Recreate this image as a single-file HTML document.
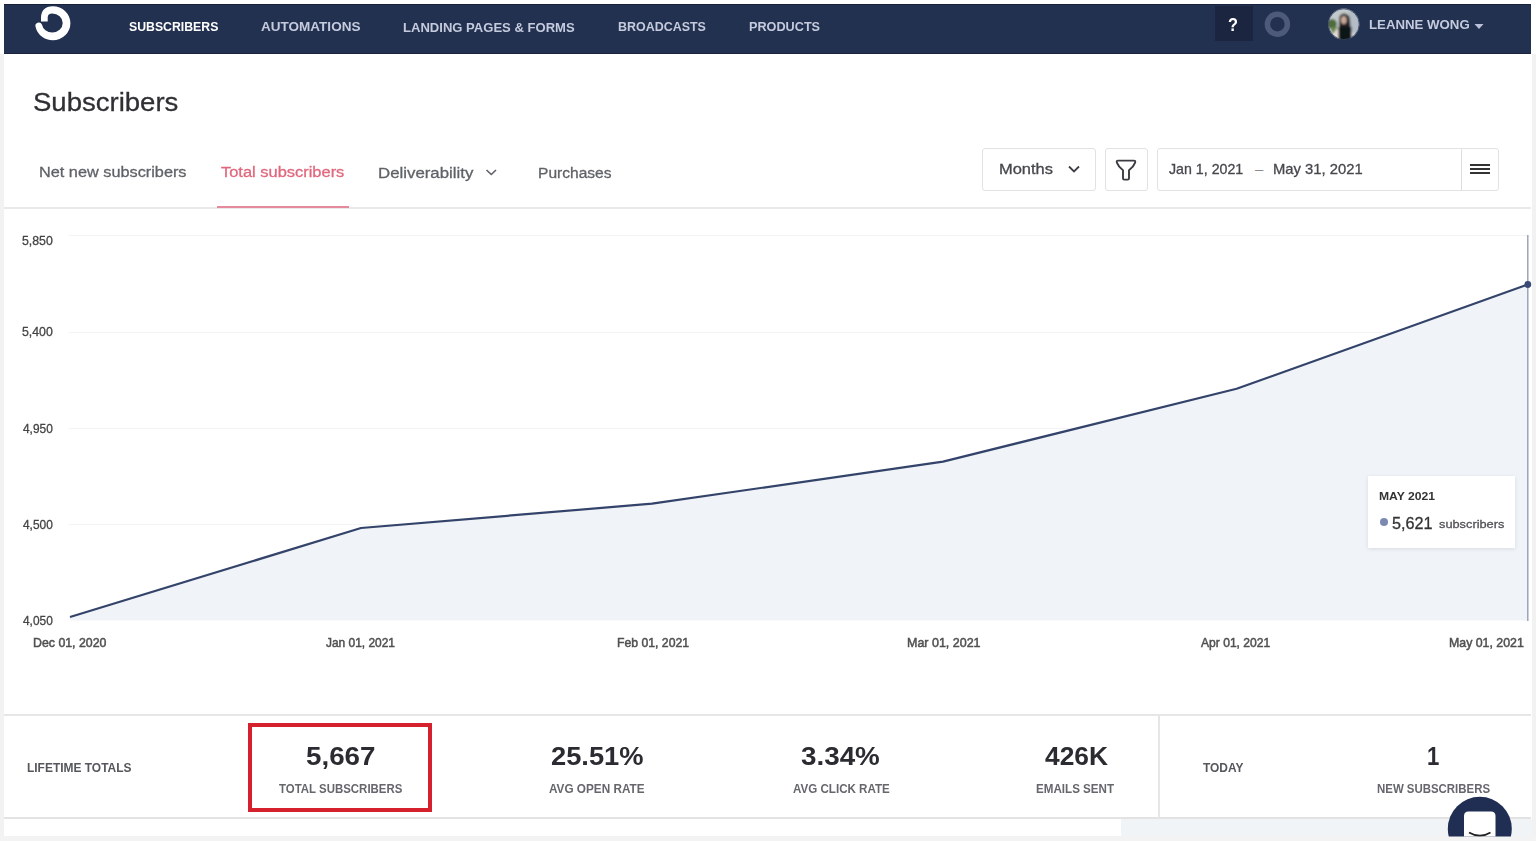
<!DOCTYPE html>
<html><head><meta charset="utf-8">
<style>
html,body{margin:0;padding:0;}
body{width:1536px;height:841px;overflow:hidden;position:relative;background:#fff;font-family:"Liberation Sans",sans-serif;}
.a{position:absolute;white-space:pre;line-height:1;}
.t{position:absolute;white-space:pre;line-height:1;transform-origin:0 0;}
.r{-webkit-text-stroke:0.3px currentColor;}
.sb{-webkit-text-stroke:0.5px currentColor;}
#lstrip{position:absolute;left:0;top:54px;width:4px;height:787px;background:#f2f2f2;}
#rstrip{position:absolute;left:1532px;top:54px;width:4px;height:787px;background:#f2f2f2;}
#nav{position:absolute;left:4px;top:4px;width:1527px;height:50px;background:#233150;}
.nv{color:#c9cfe2;font-weight:700;font-size:13px;}
.tab{color:#5d6066;font-size:16px;}
.lbl{color:#555;font-size:12px;}
.xl{color:#595959;font-size:12px;font-weight:700;}
.box{position:absolute;border:1px solid #e2e2e2;border-radius:3px;background:#fff;box-sizing:border-box;}
.big{color:#2b2d33;font-size:26px;font-weight:700;}
.cap{color:#686a6f;font-size:12px;font-weight:700;letter-spacing:0.3px;}
</style></head><body>
<div id="lstrip"></div><div id="rstrip"></div>
<div id="nav"></div>
<div class="a" style="left:4px;top:4px;width:1527px;height:1px;background:#18213b"></div>
<div class="a" style="left:4px;top:52.5px;width:1527px;height:1.3px;background:#1a2340"></div>
<!-- logo -->
<svg class="a" style="left:0;top:0" width="90" height="54" viewBox="0 0 90 54">
  <path d="M41 21.6 L41 17.5 Q41.3 6.5 52.8 6.3 A17.6 17 0 0 1 70.4 23.3 A17.6 17 0 0 1 52.8 40.3 A17.6 17 0 0 1 35.6 27 A3.4 3.4 0 0 1 41.9 24.5 A10.45 9.45 0 0 0 52.25 32.4 A10.45 9.45 0 0 0 62.7 22.95 A10.45 9.45 0 0 0 52.25 13.5 Q47.7 13.6 47.7 17.5 L47.7 21.6 Z" fill="#fff"/>
</svg>
<div class="a" style="left:1215px;top:6px;width:38px;height:35px;background:#1b253f"></div>
<svg class="a" style="left:1262px;top:9px" width="30" height="30"><circle cx="15.4" cy="15.2" r="10" fill="none" stroke="#4d5a7a" stroke-width="5.5"/></svg>
<svg class="a" style="left:1327px;top:8px" width="34" height="34" viewBox="0 0 34 34">
  <defs><clipPath id="av"><circle cx="16.8" cy="16.2" r="15.6"/></clipPath><filter id="bl"><feGaussianBlur stdDeviation="0.8"/></filter></defs>
  <g clip-path="url(#av)"><g filter="url(#bl)">
   <rect x="-2" y="-2" width="38" height="38" fill="#c3cacc"/>
   <rect x="22" y="0" width="14" height="34" fill="#b4bcc6"/>
   <ellipse cx="5" cy="16" rx="5" ry="5" fill="#4f6b3a"/>
   <ellipse cx="8" cy="22" rx="4" ry="3" fill="#6d8850"/>
   <path d="M6 34 Q6 22 11 20 L13 28 L13 34Z" fill="#e6ddd6"/>
   <path d="M23 34 L23 26 Q26 22 28 26 L28 34Z" fill="#dcd8dc"/>
   <path d="M12 34 L12 12 Q12 5.5 17 5.5 Q22.5 5.5 23 12 L24.5 34Z" fill="#221c20"/>
   <ellipse cx="16.8" cy="12" rx="2.9" ry="4" fill="#c9a99a"/>
   <rect x="11.5" y="19" width="13" height="16" fill="#111318"/>
  </g></g>
  <circle cx="16.8" cy="16.2" r="15.4" fill="none" stroke="#3b4766" stroke-width="0.8"/>
</svg>
<svg class="a" style="left:1474px;top:23px" width="11" height="7"><path d="M0.5 1 L9.5 1 L5 6Z" fill="#b9c1d8"/></svg>

<!-- title -->

<!-- tabs -->
<svg class="a" style="left:485px;top:168px" width="13" height="9"><path d="M1.5 2 L6.3 6.5 L11 2" fill="none" stroke="#5d6066" stroke-width="1.6"/></svg>
<div class="a" style="left:4px;top:207px;width:1527px;height:2px;background:#e9e9ea"></div>
<div class="a" style="left:217px;top:205.5px;width:132px;height:2.5px;background:#e58a9c"></div>

<!-- controls -->
<div class="box" style="left:982px;top:148px;width:114px;height:43px"></div>
<svg class="a" style="left:1067px;top:164px" width="14" height="10"><path d="M2 2.5 L7 7.5 L12 2.5" fill="none" stroke="#3d3f44" stroke-width="1.8"/></svg>
<div class="box" style="left:1105px;top:148px;width:43px;height:43px"></div>
<svg class="a" style="left:1114px;top:158px" width="24" height="24" viewBox="0 0 24 24"><path d="M4.2 2.6 H19.8 Q21.8 2.6 21.1 4.6 Q19.5 9 15 12.2 V20.3 Q15 21.6 13.8 21.6 H10.2 Q9 21.6 9 20.3 V12.2 Q4.5 9 2.9 4.6 Q2.2 2.6 4.2 2.6Z" fill="none" stroke="#3a3c41" stroke-width="1.9" stroke-linejoin="round"/></svg>
<div class="box" style="left:1157px;top:148px;width:342px;height:43px"></div>
<div class="a" style="left:1461px;top:149px;width:1px;height:41px;background:#dedede"></div>
<div class="a" style="left:1255px;top:161px;font-size:15px;color:#8a8c90">–</div>
<div class="a" style="left:1470px;top:164px;width:20px;height:2px;background:#333;box-shadow:0 4px 0 #333,0 8px 0 #333"></div>

<!-- chart -->
<svg class="a" style="left:0;top:0" width="1536" height="700" viewBox="0 0 1536 700">
  <g stroke="#f3f4f5" stroke-width="1">
    <line x1="68" y1="235.5" x2="1527" y2="235.5"/>
    <line x1="68" y1="332.5" x2="1527" y2="332.5"/>
    <line x1="68" y1="428.5" x2="1527" y2="428.5"/>
    <line x1="68" y1="524.5" x2="1527" y2="524.5"/>
  </g>
  <path d="M70 617 L361 528 L652 503.7 L943 461.6 L1236.6 388.8 L1527.8 284.5 L1527.8 620.5 L70 620.5Z" fill="#f0f3f7"/>
  <line x1="1527.8" y1="235" x2="1527.8" y2="621" stroke="#959db6" stroke-width="1.4"/>
  <path d="M70 617 L361 528 L652 503.7 L943 461.6 L1236.6 388.8 L1527.8 284.5" fill="none" stroke="#33436a" stroke-width="2.2" stroke-linejoin="round"/>
  <circle cx="1527.8" cy="284.5" r="3.4" fill="#3a4a75"/>
</svg>

<!-- tooltip -->
<div class="a" style="left:1368px;top:476px;width:147px;height:72px;background:#fff;box-shadow:0 1px 4px rgba(0,0,0,0.10)"></div>
<div class="a" style="left:1379.5px;top:518px;width:8px;height:8px;border-radius:50%;background:#7d8ab0"></div>

<!-- stats -->
<div class="a" style="left:4px;top:714px;width:1527px;height:2px;background:#e6e6e7"></div>
<div class="a" style="left:4px;top:817px;width:1527px;height:2px;background:#e3e3e4"></div>
<div class="a" style="left:1158px;top:715px;width:2px;height:103px;background:#e6e6e7"></div>
<div class="a" style="left:1121px;top:819px;width:411px;height:18px;background:#f1f4f7"></div>
<div class="a" style="left:0;top:836px;width:1536px;height:5px;background:#f3f3f3"></div>
<div class="a" style="left:248px;top:723px;width:184px;height:89px;box-sizing:border-box;border:4px solid #d5202e"></div>

<!-- chat bubble -->
<svg class="a" style="left:1440px;top:790px" width="80" height="51" viewBox="0 0 80 51">
  <defs><clipPath id="cb"><rect x="0" y="0" width="80" height="46.5"/></clipPath></defs>
  <g clip-path="url(#cb)">
    <circle cx="39.8" cy="38.8" r="32" fill="#1f2e52"/>
    <path d="M24 51 V26 Q24 21.5 28.5 21.5 H51 Q55.5 21.5 55.5 26 V51Z" fill="#fff"/>
    <path d="M29 42.5 Q40 49 50.5 42.5" fill="none" stroke="#222" stroke-width="1.8"/>
  </g>
</svg>
<div class="t" style="left:129.2px;top:20.2px;font-size:13.50px;font-weight:700;color:#ffffff;transform:scaleX(0.909)">SUBSCRIBERS</div>
<div class="t" style="left:261.3px;top:20.4px;font-size:13.50px;font-weight:700;color:#c5cbdd;transform:scaleX(1.002)">AUTOMATIONS</div>
<div class="t" style="left:403.3px;top:20.5px;font-size:13.50px;font-weight:700;color:#c5cbdd;transform:scaleX(0.967)">LANDING PAGES &amp; FORMS</div>
<div class="t" style="left:617.7px;top:20.4px;font-size:13.50px;font-weight:700;color:#c5cbdd;transform:scaleX(0.923)">BROADCASTS</div>
<div class="t" style="left:748.7px;top:20.4px;font-size:13.50px;font-weight:700;color:#c5cbdd;transform:scaleX(0.938)">PRODUCTS</div>
<div class="t" style="left:1369.4px;top:17.8px;font-size:13.50px;font-weight:700;color:#c5cbdd;transform:scaleX(0.980)">LEANNE WONG</div>
<div class="t" style="left:1228.0px;top:16.6px;font-size:17.50px;font-weight:700;color:#ffffff;transform:scaleX(0.934)">?</div>
<div class="t r" style="left:33.3px;top:88.8px;font-size:26.50px;font-weight:400;color:#2e3034;transform:scaleX(1.039)">Subscribers</div>
<div class="t r" style="left:38.7px;top:164.4px;font-size:15.40px;font-weight:400;color:#5f6267;transform:scaleX(1.058)">Net new subscribers</div>
<div class="t r" style="left:221.2px;top:164.4px;font-size:15.40px;font-weight:400;color:#e0677d;transform:scaleX(1.068)">Total subscribers</div>
<div class="t r" style="left:378.4px;top:164.5px;font-size:15.40px;font-weight:400;color:#5f6267;transform:scaleX(1.093)">Deliverability</div>
<div class="t r" style="left:538.3px;top:164.5px;font-size:15.40px;font-weight:400;color:#5f6267;transform:scaleX(1.011)">Purchases</div>
<div class="t r" style="left:998.7px;top:161.8px;font-size:14.40px;font-weight:400;color:#46484d;transform:scaleX(1.144)">Months</div>
<div class="t r" style="left:1168.5px;top:161.9px;font-size:14.40px;font-weight:400;color:#46484d;transform:scaleX(0.987)">Jan 1, 2021</div>
<div class="t r" style="left:1273.2px;top:161.9px;font-size:14.40px;font-weight:400;color:#46484d;transform:scaleX(1.028)">May 31, 2021</div>
<div class="t r" style="left:21.8px;top:234.9px;font-size:12.40px;font-weight:400;color:#444444;transform:scaleX(0.993)">5,850</div>
<div class="t r" style="left:21.8px;top:326.4px;font-size:12.40px;font-weight:400;color:#444444;transform:scaleX(0.993)">5,400</div>
<div class="t r" style="left:22.8px;top:422.6px;font-size:12.40px;font-weight:400;color:#444444;transform:scaleX(0.961)">4,950</div>
<div class="t r" style="left:22.8px;top:519.1px;font-size:12.40px;font-weight:400;color:#444444;transform:scaleX(0.961)">4,500</div>
<div class="t r" style="left:22.8px;top:615.2px;font-size:12.40px;font-weight:400;color:#444444;transform:scaleX(0.961)">4,050</div>
<div class="t sb" style="left:33.0px;top:636.8px;font-size:12.70px;font-weight:400;color:#505050;transform:scaleX(0.973)">Dec 01, 2020</div>
<div class="t sb" style="left:326.0px;top:636.8px;font-size:12.70px;font-weight:400;color:#505050;transform:scaleX(0.940)">Jan 01, 2021</div>
<div class="t sb" style="left:616.8px;top:636.8px;font-size:12.70px;font-weight:400;color:#505050;transform:scaleX(0.964)">Feb 01, 2021</div>
<div class="t sb" style="left:907.4px;top:636.8px;font-size:12.70px;font-weight:400;color:#505050;transform:scaleX(0.984)">Mar 01, 2021</div>
<div class="t sb" style="left:1200.7px;top:636.8px;font-size:12.70px;font-weight:400;color:#505050;transform:scaleX(0.953)">Apr 01, 2021</div>
<div class="t sb" style="left:1449.0px;top:636.8px;font-size:12.70px;font-weight:400;color:#505050;transform:scaleX(0.973)">May 01, 2021</div>
<div class="t" style="left:1379.4px;top:491.3px;font-size:11.20px;font-weight:700;color:#333333;transform:scaleX(1.086)">MAY 2021</div>
<div class="t r" style="left:1392.1px;top:515.8px;font-size:16.90px;font-weight:400;color:#333333;transform:scaleX(0.960)">5,621</div>
<div class="t r" style="left:1439.3px;top:518.7px;font-size:11.50px;font-weight:400;color:#505257;transform:scaleX(1.112)">subscribers</div>
<div class="t" style="left:26.9px;top:761.5px;font-size:12.20px;font-weight:700;color:#55575c;transform:scaleX(0.981)">LIFETIME TOTALS</div>
<div class="t" style="left:305.9px;top:742.8px;font-size:26.50px;font-weight:700;color:#2a2c31;transform:scaleX(1.047)">5,667</div>
<div class="t" style="left:278.7px;top:783.1px;font-size:12.20px;font-weight:700;color:#65676c;transform:scaleX(0.939)">TOTAL SUBSCRIBERS</div>
<div class="t" style="left:550.8px;top:743.0px;font-size:26.50px;font-weight:700;color:#2a2c31;transform:scaleX(1.030)">25.51%</div>
<div class="t" style="left:549.3px;top:783.1px;font-size:12.20px;font-weight:700;color:#65676c;transform:scaleX(0.964)">AVG OPEN RATE</div>
<div class="t" style="left:801.0px;top:743.0px;font-size:26.50px;font-weight:700;color:#2a2c31;transform:scaleX(1.049)">3.34%</div>
<div class="t" style="left:792.7px;top:783.1px;font-size:12.20px;font-weight:700;color:#65676c;transform:scaleX(0.951)">AVG CLICK RATE</div>
<div class="t" style="left:1045.0px;top:742.9px;font-size:26.50px;font-weight:700;color:#2a2c31;transform:scaleX(0.994)">426K</div>
<div class="t" style="left:1036.4px;top:783.1px;font-size:12.20px;font-weight:700;color:#65676c;transform:scaleX(0.953)">EMAILS SENT</div>
<div class="t" style="left:1203.3px;top:761.9px;font-size:12.20px;font-weight:700;color:#55575c;transform:scaleX(0.980)">TODAY</div>
<div class="t" style="left:1426.6px;top:742.8px;font-size:26.50px;font-weight:700;color:#2a2c31;transform:scaleX(0.835)">1</div>
<div class="t" style="left:1377.0px;top:783.1px;font-size:12.20px;font-weight:700;color:#65676c;transform:scaleX(0.938)">NEW SUBSCRIBERS</div>
</body></html>
